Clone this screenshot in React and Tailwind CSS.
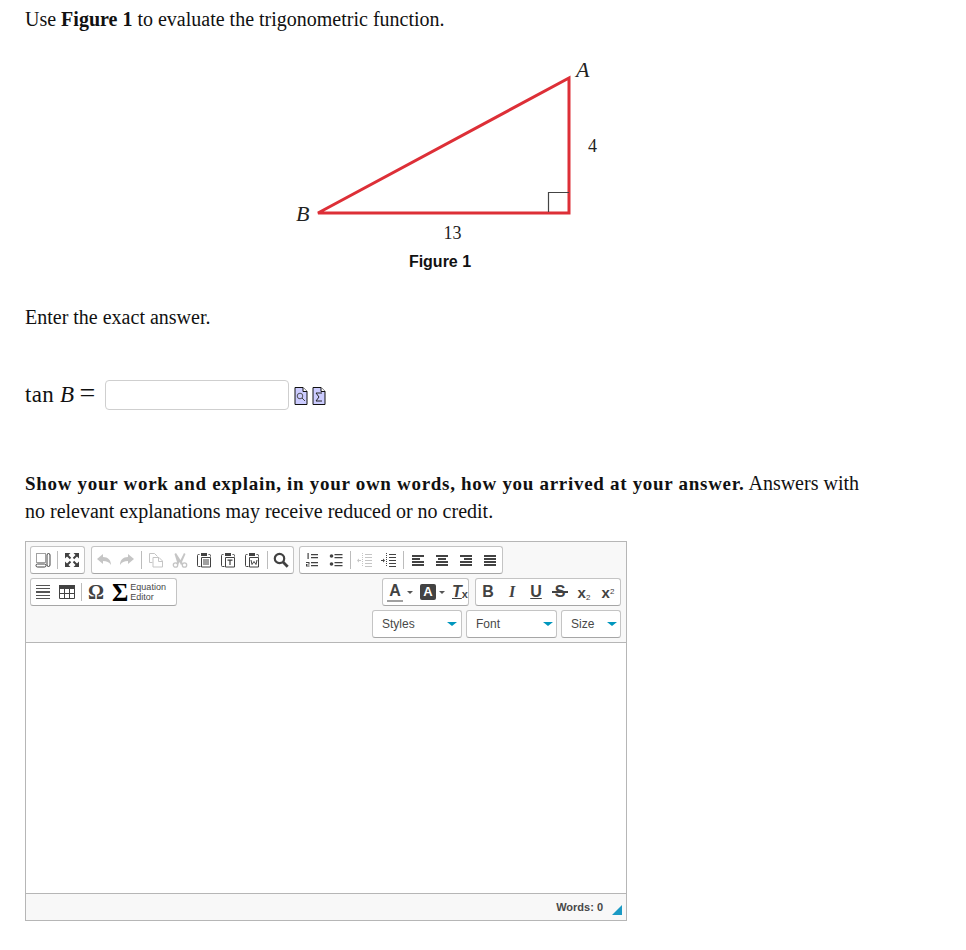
import React from 'react';

const serif = "font-['Liberation_Serif',serif]";
const sans = "font-['Liberation_Sans',Arial,sans-serif]";

const Ico = ({ children, w = 16, h = 16, dim }) => (
  <svg width={w} height={h} viewBox={`0 0 ${w} ${h}`} className={dim ? 'opacity-30' : ''} fill="#424242" stroke="none">
    {children}
  </svg>
);

const Btn = ({ children, w = 'w-[24px]' }) => (
  <div className={`${w} h-[26px] shrink-0 flex items-center justify-center`}>{children}</div>
);

const Sep = ({ l = 'ml-[2px]', r = 'mr-[2px]' }) => <div className={`w-px h-[18px] bg-[#bcbcbc] shrink-0 ${l} ${r}`} />;

const Group = ({ children, className = '' }) => (
  <div className={`h-[28px] flex items-center bg-white border border-[#c4c4c4] border-b-[#a6a6a6] rounded-[3px] ${className}`}>
    {children}
  </div>
);

const Clip = ({ children }) => (
  <Ico>
    <path d="M5 1h6v3H5z" />
    <path d="M3.500 2.500H2.500a1 1 0 0 0-1 1v10a1 1 0 0 0 1 1h2M12.500 2.500h1a1 1 0 0 1 1 1v1" fill="none" stroke="#424242" strokeWidth="1" />
    <path d="M5.500 5.500h9v9.500h-9z" fill="none" stroke="#424242" strokeWidth="1" />
    {children}
  </Ico>
);

const Lines = ({ rows }) => (
  <Ico>
    {rows.map(([x, w], i) => (
      <rect key={i} x={x} y={3 + i * 3} width={w} height="2" />
    ))}
  </Ico>
);

const Indent = ({ dim, back }) => (
  <Ico dim={dim}>
    <path d="M5.500 1v14" stroke="#424242" strokeWidth="1" strokeDasharray="1 1" />
    <path d="M8 2h7v1H8zM8 5h7v1H8zM8 8h7v1H8zM8 11h7v1H8zM8 14h7v1H8z" />
    {back ? <path d="M4 8H2V6.500L0 8.500l2 2V9h2z" /> : <path d="M0 8h2V6.500l2 2-2 2V9H0z" />}
  </Ico>
);

const Caret = () => <div className="w-0 h-0 border-x-[5px] border-x-transparent border-t-[4px] border-t-[#0096bd]" />;
const MiniCaret = () => <div className="w-0 h-0 border-x-[3px] border-x-transparent border-t-[3px] border-t-[#555]" />;

const Drop = ({ label, w, caret }) => (
  <div className={`${w} h-[28px] flex items-center bg-white border border-[#c4c4c4] border-b-[#a6a6a6] rounded-[3px] pl-[9px] text-[12px] text-[#484848]`}>
    <span>{label}</span>
    <div className={`ml-auto ${caret}`}><Caret /></div>
  </div>
);

const FileIcon = ({ children }) => (
  <svg width="14" height="18" viewBox="0 0 14 18">
    <path d="M1 .5h8l4 4v13H1z" fill="#ccccff" stroke="#111" strokeWidth="1" />
    <path d="M9 .5v4h4" fill="#fff" stroke="#111" strokeWidth="1" />
    {children}
  </svg>
);

const Letter = ({ children, className = '' }) => (
  <span className={`text-[16px] leading-none text-[#424242] ${className}`}>{children}</span>
);

function Figure() {
  return (
    <div className="w-[340px] ml-[245px] -mt-[1px]">
      <svg width="340" height="212" viewBox="270 32 340 212" className="block">
        <path d="M569 78 L569 213 L318 213 Z" fill="none" stroke="#dd2f37" strokeWidth="3" strokeLinejoin="miter" />
        <path d="M548.500 212V192.500H569" fill="none" stroke="#444" strokeWidth="1.200" />
        <text x="576" y="77" fontFamily="Liberation Serif" fontStyle="italic" fontSize="22" fill="#222">A</text>
        <text x="296" y="221" fontFamily="Liberation Serif" fontStyle="italic" fontSize="22" fill="#222">B</text>
        <text x="588" y="152" fontFamily="Liberation Serif" fontSize="18" fill="#222">4</text>
        <text x="443.500" y="239" fontFamily="Liberation Serif" fontSize="18" fill="#222">13</text>
      </svg>
      <div className={`${sans} font-bold text-[16px] leading-[20px] text-center text-[#111] mt-[8px]`}>Figure 1</div>
    </div>
  );
}

export default function App() {
  return (
    <div className={`${serif} w-[966px] h-[950px] bg-white text-[#111] overflow-hidden pl-[25px]`}>
      <p className="pt-[5px] text-[20px] leading-[28px]">
        Use <b>Figure 1</b> to evaluate the trigonometric function.
      </p>
      <Figure />
      <p className="mt-[31px] text-[20px] leading-[28px]">Enter the exact answer.</p>

      <div className="mt-[49px] h-[30px] flex items-center">
        <span className="text-[23px] leading-[28px] w-[80px] whitespace-nowrap tracking-[0.3px] -mt-[2px]">
          tan <i>B</i> <span className="text-[28px] leading-none -ml-[1px]">=</span>
        </span>
        <div className="w-[184px] h-[30px] bg-white border border-[#cfcfcf] rounded-[4px]" />
        <div className="ml-[5px] mt-[1px] flex gap-[4px]">
          <FileIcon>
            <circle cx="6" cy="9" r="2.800" fill="none" stroke="#444" strokeWidth="0.900" />
            <path d="M8 11l3 3" stroke="#444" strokeWidth="1" />
          </FileIcon>
          <FileIcon>
            <path d="M10 6H4l3 4-3 4h6" fill="none" stroke="#222" strokeWidth="1" />
          </FileIcon>
        </div>
      </div>

      <p className="mt-[59px] w-[850px] text-[20px] leading-[28px]">
        <b className="text-[19px] leading-[20px] tracking-[0.7px]">Show your work and explain, in your own words, how you arrived at your answer.</b> Answers with no relevant explanations may receive reduced or no credit.
      </p>

      <div className={`${sans} mt-[16px] w-[602px] h-[380px] border border-[#b6b6b6] flex flex-col`}>
        <div className="h-[101px] bg-[#f8f8f8] border-b border-[#b6b6b6] px-[4px] pt-[4px] flex flex-col">
          <div className="flex">
            <Group className="mr-[6px]">
              <Btn>
                <Ico>
                  <rect x="1.500" y="1.500" width="9" height="9" fill="none" stroke="#424242" strokeWidth="1" strokeDasharray="1 1" />
                  <rect x="12" y="1.500" width="3" height="13" rx="1.500" fill="none" stroke="#424242" />
                  <rect x="1" y="12" width="10" height="3" rx="1.500" fill="none" stroke="#424242" />
                </Ico>
              </Btn>
              <Sep />
              <Btn>
                <Ico>
                  <path d="M1 1h5.500L1 6.500zM15 1v5.500L9.500 1zM1 15v-5.500L6.500 15zM15 15H9.500L15 9.500z" />
                  <path d="M3 3l3.500 3.500M13 3L9.500 6.500M3 13l3.500-3.500M13 13L9.500 9.500" stroke="#424242" strokeWidth="2" />
                </Ico>
              </Btn>
            </Group>
            <Group className="mr-[5px]">
              <Btn w="w-[23px]">
                <Ico dim>
                  <path d="M1 7l6-5v3c5 0 8 3 8 8-2-3-4-4-8-4v3z" />
                </Ico>
              </Btn>
              <Btn w="w-[23px]">
                <Ico dim>
                  <path d="M15 7L9 2v3c-5 0-8 3-8 8 2-3 4-4 8-4v3z" />
                </Ico>
              </Btn>
              <Sep l="ml-[3px]" />
              <Btn>
                <Ico dim>
                  <path d="M1.500 1.500h5l3 3M1.500 1.500v9h3M5 5.500h6l3.500 3.500v6H5zM10.500 5.500v4h4" fill="none" stroke="#424242" strokeWidth="1" />
                </Ico>
              </Btn>
              <Btn>
                <Ico dim>
                  <path d="M4 1l4.500 7L12 1l1.500 1-3.500 8 1 1.600-2 1.400-1.500-3-1.500 3-2-1.400 1-1.600L2.500 2z" />
                  <circle cx="3.500" cy="13" r="2.200" fill="none" stroke="#424242" strokeWidth="1.300" />
                  <circle cx="12.500" cy="13" r="2.200" fill="none" stroke="#424242" strokeWidth="1.300" />
                </Ico>
              </Btn>
              <Btn>
                <Clip>
                  <path d="M7 7.500h6v1H7zM7 9.500h6v1H7zM7 11.500h6v1H7z" />
                </Clip>
              </Btn>
              <Btn>
                <Clip>
                  <path d="M7.500 7.500h5v1.200h-1.900V13H9.400V8.700H7.500z" />
                </Clip>
              </Btn>
              <Btn>
                <Clip>
                  <path d="M7 8l1 4.500 2-3 2 3 1-4.500" fill="none" stroke="#424242" />
                </Clip>
              </Btn>
              <Sep l="ml-[3px]" r="mr-[1px]" />
              <Btn>
                <Ico>
                  <circle cx="6.500" cy="6.500" r="4.700" fill="none" stroke="#424242" strokeWidth="2.200" />
                  <path d="M10 10l4.700 4.700" stroke="#424242" strokeWidth="2.800" />
                </Ico>
              </Btn>
            </Group>
            <Group>
              <Btn>
                <Ico w={14}>
                  <path d="M6 2h7v1.300H6zM6 5h7v1.300H6zM6 10h7v1.300H6zM6 13h7v1.300H6z" />
                  <path d="M2.500 1h1.200v6H2.500zM1 10h3.500v2.500H2v1h2.500v1H1v-2.500h2.500v-1H1z" />
                </Ico>
              </Btn>
              <Btn>
                <Ico w={14}>
                  <path d="M5.500 2h8v1.300h-8zM5.500 5h8v1.300h-8zM5.500 10h8v1.300h-8zM5.500 13h8v1.300h-8z" />
                  <circle cx="2.500" cy="4" r="1.800" />
                  <circle cx="2.500" cy="12" r="1.800" />
                </Ico>
              </Btn>
              <Sep />
              <Btn><Indent dim back /></Btn>
              <Btn><Indent /></Btn>
              <Sep />
              <Btn><Lines rows={[[2, 12], [2, 8], [2, 12], [2, 12]]} /></Btn>
              <Btn><Lines rows={[[2, 12], [4, 8], [2, 12], [2, 12]]} /></Btn>
              <Btn><Lines rows={[[2, 12], [6, 8], [2, 12], [2, 12]]} /></Btn>
              <Btn><Lines rows={[[2, 12], [2, 12], [2, 12], [2, 12]]} /></Btn>
            </Group>
          </div>

          <div className="flex justify-between mt-[4px] mr-[1px]">
            <Group className="w-[147px]">
              <Btn>
                <Ico>
                  <path d="M1 1h14v1H1zM1 4h14v1H1zM1 7h14v2H1zM1 11h14v1H1zM1 14h14v1H1z" opacity="0.900" />
                </Ico>
              </Btn>
              <Btn>
                <Ico>
                  <path d="M0 1h16v4H0z" />
                  <path d="M.5 4.500h15v10H.5zM5.500 5v9M10.500 5v9M1 9.500h14" fill="none" stroke="#424242" />
                </Ico>
              </Btn>
              <Sep />
              <Btn><span className={`${serif} text-[20px] leading-none font-bold text-[#424242]`}>Ω</span></Btn>
              <div className="flex items-center ml-[4px]">
                <span className={`${serif} text-[25px] leading-none font-bold text-black`}>Σ</span>
                <span className="ml-[2px] text-[9px] leading-[10px] text-[#484848]">Equation<br />Editor</span>
              </div>
            </Group>
            <div className="flex gap-[6px]">
              <Group className="w-[87px]">
                <div className="w-[24px] flex flex-col items-center">
                  <Letter className="font-bold">A</Letter>
                  <div className="w-[16px] h-[2px] bg-[#a0a0a0] mt-[1px]" />
                </div>
                <MiniCaret />
                <div className="ml-[7px] w-[16px] h-[16px] rounded-[2px] bg-[#424242] flex items-center justify-center text-white text-[13px] font-bold">A</div>
                <div className="ml-[3px]"><MiniCaret /></div>
                <span className="ml-[7px] flex items-end">
                  <Letter className="italic font-bold underline">T</Letter>
                  <span className="text-[11px] leading-none font-bold text-[#424242]">x</span>
                </span>
              </Group>
              <Group className="w-[146px]">
                <Btn><Letter className="font-bold">B</Letter></Btn>
                <Btn><Letter className={`${serif} font-bold italic`}>I</Letter></Btn>
                <Btn><Letter className="font-bold underline">U</Letter></Btn>
                <Btn>
                  <span className="relative flex items-center justify-center">
                    <Letter className="font-bold">S</Letter>
                    <span className="absolute w-[16px] h-[2px] bg-[#424242]" />
                  </span>
                </Btn>
                <Btn><span className="text-[#424242] font-bold text-[15px] leading-none">x<sub className="text-[8px] font-normal">2</sub></span></Btn>
                <Btn><span className="text-[#424242] font-bold text-[15px] leading-none">x<sup className="text-[8px] font-normal">2</sup></span></Btn>
              </Group>
            </div>
          </div>

          <div className="flex justify-end gap-[4px] mt-[4px] mr-[1px]">
            <Drop label="Styles" w="w-[90px]" caret="mr-[4px]" />
            <Drop label="Font" w="w-[91px]" caret="mr-[3px]" />
            <Drop label="Size" w="w-[60px]" caret="mr-[3px]" />
          </div>
        </div>

        <div className="h-[250px] bg-white" />

        <div className="flex-1 bg-[#f8f8f8] border-t border-[#b6b6b6] flex items-center justify-end">
          <span className="text-[11px] font-bold text-[#484848] mr-[9px]">Words: 0</span>
          <svg width="10" height="10" viewBox="0 0 10 10" className="mr-[4px] mt-[5px]">
            <path d="M10 0V10H0z" fill="#1a9ac4" />
          </svg>
        </div>
      </div>
    </div>
  );
}
